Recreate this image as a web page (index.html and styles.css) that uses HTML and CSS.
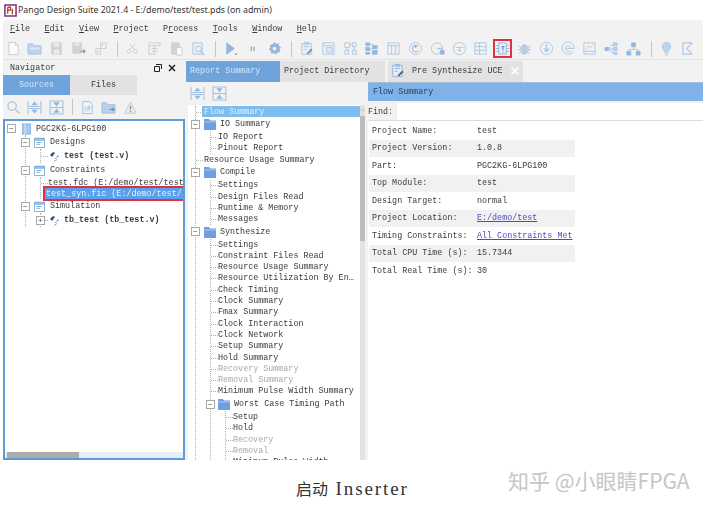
FILE: index.html
```html
<!DOCTYPE html>
<html lang="en">
<head>
    <meta charset="UTF-8">
    <meta name="viewport" content="width=device-width, initial-scale=1.0">
    <title>Pango Design Suite</title>
    <link rel="stylesheet" href="styles.css">
</head>
<body>
    <svg class="defs" width="0" height="0">
        <symbol id="i-expand" viewBox="0 0 14 14"><path d="M1 1v12M13 1v12" /><path d="M2 6h10M2 8h10" /><path d="M7 1.500 4 5h6zM7 12.500 4 9h6z" class="solid" /></symbol>
        <symbol id="i-collapse" viewBox="0 0 14 14"><path d="M1 1h12v12H1z" /><path d="M1 7h12" /><path d="M7 6 4 2h6zM7 8l-3 4h6z" class="solid" /></symbol>
        <symbol id="i-folder" viewBox="0 0 12 12"><path d="M0 1h5l1 1.500h6V12H0z" class="fold" /><path d="M0 4h12" class="lite" /></symbol>
        <symbol id="i-verilog" viewBox="0 0 11 11"><path d="M1 4l3-3 2 1-3 4z" class="dark" /><path d="M6 8l3-3M5 10.500l3-2M8 4.500l2 1" /></symbol>
        <symbol id="i-list" viewBox="0 0 12 12"><path d="M.5 1.500h11v10H.5z" fill="#fff" /><path d="M.5 1.500h11v2H.5z" class="flat" /><path d="M2.500 6h6M2.500 8h4" /></symbol>
    </svg>

    <div class="titlebar">
        <svg class="logo" viewBox="0 0 14 14"><path d="M1 1h12v12H1z" fill="#fff" stroke="#7a2f86" stroke-width="1.6" /><path d="M4 3.500v7M4 3.500h3v3H4M9 5v6" fill="none" stroke="#c0392b" stroke-width="1.4" /></svg>
        <span>Pango Design Suite 2021.4 - E:/demo/test/test.pds (on admin)</span>
    </div>

    <div class="app">
        <div class="menubar">
            <span><u>F</u>ile</span>
            <span><u>E</u>dit</span>
            <span><u>V</u>iew</span>
            <span><u>P</u>roject</span>
            <span>P<u>r</u>ocess</span>
            <span><u>T</u>ools</span>
            <span><u>W</u>indow</span>
            <span><u>H</u>elp</span>
        </div>

        <div class="toolbar">
            <svg class="ic off" viewBox="0 0 16 16"><path d="M3 1.500h7l3 3v10H3z" fill="#fff" /><path d="M10 1.500v3h3" /></svg>
            <svg class="ic" viewBox="0 0 16 16"><path d="M1 3h5l1 2h8v9H1z" class="flat" /><path d="M3 7h10v2H3z" fill="#d5e6f7" stroke="none" /></svg>
            <svg class="ic off" viewBox="0 0 16 16"><path d="M3 2h10v12H3z" class="flat" /><path d="M5 2h6v4H5zM5 9h6v5H5z" fill="#e8e8e8" stroke="none" /></svg>
            <svg class="ic off" viewBox="0 0 16 16"><path d="M2 2h9v11H2z" class="flat" /><path d="M4 2h5v3H4z" fill="#e8e8e8" stroke="none" /><path d="M10 11h5M13 9l2 2-2 2" stroke="#6f7f90" stroke-width="1.4" /></svg>
            <svg class="ic off" viewBox="0 0 16 16"><path d="M8 2h6v6H8zM3 8h5v6H3z" /><path d="M10 3v3M5 10v3" /></svg>
            <i class="sep"></i>
            <svg class="ic off" viewBox="0 0 16 16"><circle cx="4.500" cy="11" r="2" /><circle cx="11" cy="11" r="2" /><path d="M5.500 9 11 3M10 9 5 3" /></svg>
            <svg class="ic off" viewBox="0 0 16 16"><path d="M2 2h12v3H2zM2 5v9h6V5M5 8h6M5 11h6" /></svg>
            <svg class="ic off" viewBox="0 0 16 16"><path d="M3 2h8v12H3z" class="flat" /><path d="M8 7h6v8H8z" fill="#fff" /></svg>
            <svg class="ic" viewBox="0 0 16 16"><path d="M2 2h10v12H2z" fill="#e3eefa" /><circle cx="8" cy="8.500" r="3" /><path d="M10 11l4 4" stroke-width="1.500" /></svg>
            <i class="sep"></i>
            <svg class="ic" viewBox="0 0 16 16"><path d="M4 2l8 6-8 6z" class="deep" /><path d="M13 13h2v2h-2z" fill="#7a8796" stroke="none" /></svg>
            <svg class="ic off" viewBox="0 0 16 16"><path d="M6 6h1.500v5H6zM9 6h1.500v5H9z" fill="#8a8a8a" stroke="none" /></svg>
            <svg class="ic" viewBox="0 0 16 16"><path d="M8 1.500l1.500 2 2.500-.5.500 2.500 2 1.500-1.500 2 .5 2.500-2.500.5-1.500 2-2-1.500-2.500.5-.5-2.500-2-1.500 1.500-2-.5-2.500 2.500-.5z" class="deep" /><circle cx="8" cy="8" r="2" fill="#eef4fb" stroke="none" /></svg>
            <i class="sep"></i>
            <svg class="ic" viewBox="0 0 16 16"><path d="M3 2.500h10v12H3z" fill="#e3eefa" /><path d="M6 1.500h4v2H6z" class="flat" /><path d="M5 6h6M5 9h3" /><path d="M8 13l5-5 1.500 1.500-5 5z" fill="#667" stroke="none" /></svg>
            <svg class="ic" viewBox="0 0 16 16"><path d="M2 2h12v12H2z" /><path d="M2 5h12" /><path d="M6 7h6v5H6z" fill="#d5e6f7" /></svg>
            <svg class="ic" viewBox="0 0 16 16"><path d="M2 2h5v5H2zM10 2h4v4h-4zM2 10h4v4H2zM10 10h4v4h-4zM7 4h3M4 7v3M12 6v4" /></svg>
            <svg class="ic" viewBox="0 0 16 16"><path d="M2 2h4v3H2zM2 7h4v3H2zM9 5h5v3H9zM9 10h5v4H9zM2 12h4v2H2z" class="deep" /><path d="M6 3.500h3v2M6 8.500h3" /></svg>
            <svg class="ic" viewBox="0 0 16 16"><path d="M2 2h12v12H2z" /><path d="M2 5h12M6 5v9M10 5v9" /></svg>
            <svg class="ic" viewBox="0 0 16 16"><circle cx="8" cy="8" r="6.500" /><path d="M11 6a3.500 3.500 0 1 0 0 4" stroke-width="1.500" /><path d="M6 6l3-2v4z" class="solid" /></svg>
            <svg class="ic" viewBox="0 0 16 16"><circle cx="7.500" cy="8" r="6" /><path d="M7.500 8h6" stroke-width="1.500" /><path d="M11 10h4v4h-4z" class="deep" /></svg>
            <svg class="ic" viewBox="0 0 16 16"><circle cx="8" cy="8" r="6.500" /><path d="M4 7h8M8 7v5M6 10h4" /></svg>
            <svg class="ic" viewBox="0 0 16 16"><path d="M2 2h12v12H2zM2 6h12M2 10h12M7 2v12" /></svg>
            <span class="marked">
                <svg class="ic" viewBox="0 0 16 16"><path d="M4 2h8v12H4z" fill="#e3eefa" /><path d="M1 5h3M1 8h3M1 11h3M12 5h3M12 8h3M12 11h3" /><path d="M7 6h3M8.500 6v4M8.500 11.500v1" stroke="#4f7fb5" /></svg>
            </span>
            <svg class="ic" viewBox="0 0 16 16"><ellipse cx="8" cy="9" rx="4" ry="5" class="flat" /><path d="M8 4v10M1 5l3 2M15 5l-3 2M1 9h3M15 9h-3M2 14l2-2M14 14l-2-2" /></svg>
            <svg class="ic" viewBox="0 0 16 16"><circle cx="8" cy="8" r="6.500" /><path d="M8 3.500V10M5 8l3 3.500L11 8" stroke-width="1.500" /></svg>
            <svg class="ic" viewBox="0 0 16 16"><path d="M13 11a6.500 6.500 0 1 1 1-3H6" /><path d="M11 8a3 3 0 1 0-1 2.500" /></svg>
            <svg class="ic" viewBox="0 0 16 16"><path d="M2 2h12v12H2z" /><path d="M2 11h12" /><path d="M4 9l3-4 2 2 3-3" /></svg>
            <svg class="ic" viewBox="0 0 16 16"><path d="M1 7h4v3H1z" class="deep" /><path d="M10 2h4v3h-4zM10 7h4v3h-4zM10 12h4v2h-4z" class="flat" /><path d="M5 8l5-5M5 8.500h5M5 9l5 4" /></svg>
            <svg class="ic" viewBox="0 0 16 16"><path d="M6 2h4v4H6zM1 11h4v4H1zM11 11h4v4h-4z" class="deep" /><path d="M8 6v3M3 11V9h10v2" /></svg>
            <i class="sep"></i>
            <svg class="ic" viewBox="0 0 16 16"><path d="M8 1.500a4.500 4.500 0 0 1 2.500 8.200V11h-5V9.700A4.500 4.500 0 0 1 8 1.500z" class="flat" /><path d="M6 13h4M7 15h2" stroke="#8a98a8" /></svg>
            <svg class="ic" viewBox="0 0 16 16"><path d="M3 2h10M3 14h10M3 2v12M13 2 7 8l6 6" stroke-width="1.300" /></svg>
        </div>

        <div class="workspace">
            <section class="navigator">
                <header class="nav-head">
                    <span>Navigator</span>
                    <span class="nav-controls">
                        <svg viewBox="0 0 8 8"><path d="M2 .5h5.500V5M.5 2.500h5v5h-5z" /></svg>
                        <svg viewBox="0 0 8 8"><path d="M1 1l6 6M7 1 1 7" stroke-width="1.500" /></svg>
                    </span>
                </header>
                <div class="nav-tabs">
                    <div class="nav-tab active">Sources</div>
                    <div class="nav-tab">Files</div>
                </div>
                <div class="nav-tools">
                    <svg class="ic off" viewBox="0 0 16 16"><circle cx="6.500" cy="6.500" r="4.500" stroke="#9fb6cf" stroke-width="1.300" /><path d="M10 10l4.500 4.500" stroke="#9fb6cf" stroke-width="1.500" /></svg>
                    <svg class="ic"><use href="#i-expand" /></svg>
                    <svg class="ic"><use href="#i-collapse" /></svg>
                    <i class="sep"></i>
                    <svg class="ic" viewBox="0 0 16 16"><path d="M3 1.500h7l3 3v10H3z" fill="#eef4fb" /><path d="M6 7v5M8.500 12V7h2v2.500h-2" /></svg>
                    <svg class="ic" viewBox="0 0 16 16"><path d="M1 3h5l1 2h8v9H1z" class="flat" /><path d="M9 10h5M12 8l2 2-2 2" stroke="#33659c" /></svg>
                    <svg class="ic off" viewBox="0 0 16 16"><path d="M8 2l6 12H2z" fill="#eee" /><path d="M8 6v4M8 11.500v1.500" stroke="#777" stroke-width="1.500" /></svg>
                </div>
                <div class="source-tree">
                    <div class="row top"><i class="exp">&minus;</i><svg class="tree-ic chip" viewBox="0 0 9 12"><path d="M0 1h9v10H0z" class="flat" /><path d="M2 1h2v10H2z" fill="#bcd5f0" stroke="none" /></svg>PGC2KG-6LPG100</div>
                    <ul class="branch">
                        <li>
                            <div class="row"><i class="exp">&minus;</i><svg class="tree-ic"><use href="#i-list" /></svg>Designs</div>
                            <ul class="branch sub">
                                <li><div class="row dash strong"><svg class="tree-ic"><use href="#i-verilog" /></svg>test (test.v)</div></li>
                            </ul>
                        </li>
                        <li>
                            <div class="row"><i class="exp">&minus;</i><svg class="tree-ic"><use href="#i-list" /></svg>Constraints</div>
                            <ul class="branch sub">
                                <li><div class="row dash file">test.fdc (E:/demo/test/test</div></li>
                                <li><div class="row dash file picked"><span>test_syn.fic (E:/demo/test/</span></div></li>
                            </ul>
                        </li>
                        <li>
                            <div class="row"><i class="exp">&minus;</i><svg class="tree-ic"><use href="#i-list" /></svg>Simulation</div>
                            <ul class="branch sub">
                                <li><div class="row dash strong"><i class="exp">+</i><svg class="tree-ic"><use href="#i-verilog" /></svg>tb_test (tb_test.v)</div></li>
                            </ul>
                        </li>
                    </ul>
                    <div class="hscroll"><b></b></div>
                </div>
            </section>

            <section class="report">
                <div class="report-tabs">
                    <div class="report-tab active">Report Summary</div>
                    <div class="report-tab">Project Directory</div>
                    <div class="report-tab uce">
                        <svg class="ic" viewBox="0 0 16 16"><path d="M3 2.500h10v12H3z" fill="#e3eefa" /><path d="M6 1.500h4v2H6z" class="flat" /><path d="M5 6h6M5 9h3" /><path d="M8 13l5-5 1.500 1.500-5 5z" fill="#667" stroke="none" /></svg>
                        <span>Pre Synthesize UCE</span>
                        <svg class="tab-close" viewBox="0 0 8 8"><path d="M.5.500l7 7M7.500.500l-7 7" /></svg>
                    </div>
                </div>
                <div class="report-body">
                    <div class="flow-pane">
                        <div class="flow-tools">
                            <svg class="ic"><use href="#i-expand" /></svg>
                            <svg class="ic"><use href="#i-collapse" /></svg>
                        </div>
                        <div class="flow-main">
                            <div class="flow-tree">
                                <ul class="branch">
                                    <li><div class="row dash current"><span>Flow Summary</span></div></li>
                                    <li>
                                        <div class="row folder"><i class="exp">&minus;</i><svg class="tree-ic"><use href="#i-folder" /></svg>IO Summary</div>
                                        <ul class="branch sub">
                                            <li><div class="row dash">IO Report</div></li>
                                            <li><div class="row dash">Pinout Report</div></li>
                                        </ul>
                                    </li>
                                    <li><div class="row dash">Resource Usage Summary</div></li>
                                    <li>
                                        <div class="row folder"><i class="exp">&minus;</i><svg class="tree-ic"><use href="#i-folder" /></svg>Compile</div>
                                        <ul class="branch sub">
                                            <li><div class="row dash">Settings</div></li>
                                            <li><div class="row dash">Design Files Read</div></li>
                                            <li><div class="row dash">Runtime &amp; Memory</div></li>
                                            <li><div class="row dash">Messages</div></li>
                                        </ul>
                                    </li>
                                    <li>
                                        <div class="row folder"><i class="exp">&minus;</i><svg class="tree-ic"><use href="#i-folder" /></svg>Synthesize</div>
                                        <ul class="branch sub">
                                            <li><div class="row dash">Settings</div></li>
                                            <li><div class="row dash">Constraint Files Read</div></li>
                                            <li><div class="row dash">Resource Usage Summary</div></li>
                                            <li><div class="row dash">Resource Utilization By En…</div></li>
                                            <li><div class="row dash">Check Timing</div></li>
                                            <li><div class="row dash">Clock Summary</div></li>
                                            <li><div class="row dash">Fmax Summary</div></li>
                                            <li><div class="row dash">Clock Interaction</div></li>
                                            <li><div class="row dash">Clock Network</div></li>
                                            <li><div class="row dash">Setup Summary</div></li>
                                            <li><div class="row dash">Hold Summary</div></li>
                                            <li><div class="row dash muted">Recovery Summary</div></li>
                                            <li><div class="row dash muted">Removal Summary</div></li>
                                            <li><div class="row dash">Minimum Pulse Width Summary</div></li>
                                            <li>
                                                <div class="row folder"><i class="exp">&minus;</i><svg class="tree-ic"><use href="#i-folder" /></svg>Worst Case Timing Path</div>
                                                <ul class="branch sub">
                                                    <li><div class="row dash">Setup</div></li>
                                                    <li><div class="row dash">Hold</div></li>
                                                    <li><div class="row dash muted">Recovery</div></li>
                                                    <li><div class="row dash muted">Removal</div></li>
                                                    <li><div class="row dash">Minimum Pulse Width</div></li>
                                                </ul>
                                            </li>
                                        </ul>
                                    </li>
                                </ul>
                            </div>
                            <div class="vscroll">
                                <svg viewBox="0 0 6 4"><path d="M.5 3.500 3 1l2.500 2.500" /></svg>
                                <b></b>
                            </div>
                        </div>
                    </div>

                    <div class="summary-pane">
                        <div class="summary-head">Flow Summary</div>
                        <div class="find-row">
                            <label>Find:</label>
                            <div class="find-input"></div>
                        </div>
                        <div class="summary-body">
                            <div class="summary-table">
                                <div class="cell-row"><span>Project Name:</span><span>test</span></div>
                                <div class="cell-row"><span>Project Version:</span><span>1.0.8</span></div>
                                <div class="cell-row"><span>Part:</span><span>PGC2KG-6LPG100</span></div>
                                <div class="cell-row"><span>Top Module:</span><span>test</span></div>
                                <div class="cell-row"><span>Design Target:</span><span>normal</span></div>
                                <div class="cell-row"><span>Project Location:</span><a href="#">E:/demo/test</a></div>
                                <div class="cell-row"><span>Timing Constraints:</span><a href="#">All Constraints Met</a></div>
                                <div class="cell-row"><span>Total CPU Time (s):</span><span>15.7344</span></div>
                                <div class="cell-row"><span>Total Real Time (s):</span><span>30</span></div>
                            </div>
                        </div>
                    </div>
                </div>
            </section>
        </div>
    </div>

    <div class="footer">
        <div class="caption">启动 <span class="latin">Inserter</span></div>
        <div class="watermark">知乎 @小眼睛FPGA</div>
    </div>
</body>
</html>
```

FILE: styles.css
```css
* {
    box-sizing: border-box;
}

body {
    margin: 0;
    width: 705px;
    height: 510px;
    overflow: hidden;
    background-color: #fff;
    font-family: "Liberation Mono", monospace;
    font-size: 8.4px;
    color: #3a3a3a;
}

.defs {
    position: absolute;
}

/* shared icon look */
.ic {
    width: 15px;
    height: 15px;
    flex: none;
    fill: none;
    stroke: #8fb4dc;
    stroke-width: 1;
}

.ic.off {
    stroke: #b9bec4;
}

.flat {
    fill: #a9c8ea;
}

.ic.off .flat {
    fill: #c4c8cd;
}

.fold {
    fill: #6f9fe0;
}

.deep {
    fill: #6f9fd6;
    stroke: #6f9fd6;
}

.solid {
    fill: #7ea9d8;
    stroke: none;
}

.lite {
    stroke: #a9c8f0;
    fill: none;
}

.dark {
    fill: #33507a;
    stroke: none;
}

.sep {
    width: 1px;
    height: 16px;
    flex: none;
    background-color: #c6c6c6;
}

.titlebar {
    height: 20px;
    display: flex;
    align-items: center;
    gap: 1px;
    padding-left: 4px;
    font-family: "Noto Sans", sans-serif;
    font-size: 8.8px;
    color: #333;
}

.logo {
    width: 13px;
    height: 13px;
}

.app {
    width: 700px;
    height: 440px;
    margin-left: 3px;
    overflow: hidden;
    background-color: #f2f2f2;
    filter: blur(0.35px);
}

.menubar {
    height: 18px;
    display: flex;
    align-items: center;
    gap: 14.4px;
    padding-left: 7px;
    font-size: 8.4px;
}

.toolbar {
    height: 22px;
    display: flex;
    align-items: center;
    gap: 6.8px;
    padding-left: 2.5px;
    border-bottom: 1px solid #e2e2e2;
}

.toolbar .ic {
    opacity: 0.7;
}

.toolbar .sep {
    margin: 0 0.2px 0 2.7px;
}

.marked {
    display: flex;
    width: 15px;
    height: 15px;
    outline: 2px solid #e0313f;
}

.marked .ic {
    opacity: 1;
}

.workspace {
    height: 400px;
    display: flex;
    gap: 1px;
}

/* left dock */
.navigator {
    width: 182px;
    display: flex;
    flex-direction: column;
}

.nav-head {
    height: 15px;
    display: flex;
    align-items: center;
    justify-content: space-between;
    padding: 0 9px 0 7px;
}

.nav-controls {
    display: flex;
    gap: 6px;
}

.nav-controls svg {
    width: 8px;
    height: 8px;
    fill: none;
    stroke: #222;
}

.nav-tabs {
    height: 20px;
    display: flex;
}

.nav-tab {
    width: 67px;
    display: flex;
    align-items: center;
    justify-content: center;
    background-color: #e2e2e2;
}

.nav-tab.active {
    background-color: #6ea3dc;
    color: #d5e6f7;
}

.nav-tools {
    height: 24px;
    display: flex;
    align-items: center;
    gap: 6.8px;
    padding-left: 2.5px;
}

.nav-tools .ic {
    opacity: 0.8;
}

.nav-tools .sep {
    margin: 0 0 0 1px;
}

.source-tree {
    position: relative;
    flex: 1;
    padding-top: 1px;
    border: 2px solid #5f9ad8;
    background-color: #fff;
    overflow: hidden;
}

.hscroll {
    position: absolute;
    left: 0;
    right: 0;
    bottom: 0;
    height: 6px;
    padding-left: 2px;
    background-color: #e6eef6;
}

.hscroll b {
    display: block;
    width: 72px;
    height: 6px;
    background-color: #ababab;
}

/* tree rows, the dotted guides come from the nested lists */
.branch {
    list-style: none;
    margin: 0;
    padding: 0;
    border-left: 1px dotted #b4b4b4;
}

.row {
    position: relative;
    display: flex;
    align-items: center;
    white-space: nowrap;
}

.row.dash::before {
    content: "";
    position: absolute;
    left: 0;
    top: 50%;
    width: 7px;
    border-top: 1px dotted #b4b4b4;
}

.exp {
    position: absolute;
    top: 50%;
    width: 9px;
    height: 9px;
    margin-top: -4.500px;
    border: 1px solid #a8a8a8;
    background-color: #fff;
    font-style: normal;
    font-size: 8px;
    line-height: 7px;
    text-align: center;
    color: #555;
}

.tree-ic {
    flex: none;
    fill: none;
    stroke: #7ea9d8;
}

.source-tree .row {
    height: 14px;
    font-size: 8.4px;
}

.source-tree .row.top {
    height: 13px;
    padding-left: 17px;
    gap: 5px;
}

.source-tree .row.top .exp {
    left: 2px;
}

.source-tree .chip {
    width: 9px;
    height: 12px;
}

.source-tree > .branch {
    margin-left: 20px;
}

.source-tree .tree-ic:not(.chip) {
    width: 11px;
    height: 11px;
}

.source-tree .branch > li > .row:not(.dash) {
    padding-left: 8px;
    gap: 5px;
}

.source-tree .branch > li > .row:not(.dash) .exp {
    left: -5px;
}

.source-tree .sub {
    margin-left: 14px;
}

.source-tree .sub .row {
    padding-left: 8px;
    gap: 4px;
}

.source-tree .row.strong {
    font-weight: 700;
}

.source-tree .row.strong .exp {
    left: -5px;
    font-weight: 400;
}

.source-tree .row.file {
    height: 11px;
    padding-left: 7px;
    overflow: hidden;
}

.source-tree .row.picked {
    margin-left: 4px;
    padding-left: 1px;
    background-color: #5aa0ec;
    color: #eaf3fd;
    outline: 2px solid #e0313f;
}

.source-tree .row.picked::before {
    display: none;
}

/* right side */
.report {
    flex: 1;
    display: flex;
    flex-direction: column;
    min-width: 0;
}

.report-tabs {
    height: 21px;
    margin-top: 1px;
    flex: none;
    display: flex;
}

.report-tab {
    width: 105px;
    display: flex;
    align-items: center;
    padding: 0 0 2px 4px;
    white-space: nowrap;
    background-color: #e2e2e2;
}

.report-tab.active {
    width: 94px;
    background-color: #6ea3dc;
    color: #d5e6f7;
}

.report-tab.uce {
    width: 135px;
    margin-left: 3px;
    padding-left: 2px;
    gap: 7px;
}

.tab-close {
    width: 8px;
    height: 8px;
    margin-left: 2px;
    fill: none;
    stroke: #fff;
    stroke-width: 1.6;
}

.report-body {
    flex: 1;
    display: flex;
    min-height: 0;
}

.flow-pane {
    width: 182px;
    display: flex;
    flex-direction: column;
}

.flow-tools {
    height: 23px;
    flex: none;
    display: flex;
    align-items: center;
    gap: 7px;
    padding-left: 3.5px;
}

.flow-tools .ic {
    opacity: 0.8;
}

.flow-main {
    flex: 1;
    min-height: 0;
    display: flex;
    padding-left: 2px;
}

.flow-tree {
    width: 172px;
    padding-top: 1px;
    background-color: #fff;
    overflow: hidden;
}

.flow-tree > .branch {
    margin-left: 7px;
}

.flow-tree .row {
    height: 11.300px;
    padding-left: 7px;
}

.flow-tree > .branch > li > .row {
    padding-left: 8px;
}

.flow-tree .row.folder {
    height: 14.200px;
    gap: 4px;
}

.flow-tree .row.folder .exp {
    left: -5px;
}

.flow-tree .tree-ic {
    width: 12px;
    height: 12px;
    stroke: none;
}

.flow-tree .sub {
    margin-left: 14px;
}

.row.muted {
    color: #a8a8a8;
}

.row.current {
    margin-left: 6px;
    padding-left: 2px !important;
    background-color: #7ebcf0;
    color: #e0f0fd;
}

.row.current::before {
    left: -6px;
}

.vscroll {
    width: 5px;
    background-color: #e2e2e2;
}

.vscroll svg {
    display: block;
    width: 5px;
    height: 4px;
    margin-top: 3px;
    fill: none;
    stroke: #9fb6cf;
}

.vscroll b {
    display: block;
    height: 125px;
    margin-top: 4px;
    background-color: #bcbcbc;
}

.summary-pane {
    flex: 1;
    display: flex;
    flex-direction: column;
    min-width: 0;
}

.summary-head {
    height: 19px;
    flex: none;
    display: flex;
    align-items: center;
    padding-left: 5px;
    border-top: 1px solid #a8bcd2;
    background-color: #7eb2e8;
    color: #26415e;
}

.find-row {
    height: 18px;
    flex: none;
    margin-top: 2px;
    display: flex;
    align-items: center;
    border-bottom: 1px solid #ddd;
}

.find-input {
    flex: 1;
    height: 100%;
    margin-left: 4px;
    background-color: #fff;
}

.summary-body {
    flex: 1;
    background-color: #fff;
    padding: 1px 0 0 1px;
}

.summary-table {
    width: 206px;
}

.cell-row {
    height: 17.500px;
    display: grid;
    grid-template-columns: 105px 1fr;
    align-items: center;
    padding-left: 3px;
}

.cell-row:nth-child(even) {
    background-color: #f1f1f1;
}

.cell-row a {
    color: #4a4ad0;
}

/* text under the screenshot */
.footer {
    position: relative;
    height: 50px;
}

.caption {
    padding-top: 16px;
    padding-left: 296px;
    font-family: "Noto Sans CJK SC", sans-serif;
    font-size: 16px;
    line-height: 24px;
    color: #333;
}

.latin {
    margin-left: 4px;
    font-family: "Liberation Serif", serif;
    font-size: 19px;
    letter-spacing: 1.9px;
}

.watermark {
    position: absolute;
    left: 508px;
    top: 5px;
    font-family: "Noto Sans CJK SC", sans-serif;
    font-size: 21px;
    color: #c6c6c6;
    white-space: nowrap;
}
```
